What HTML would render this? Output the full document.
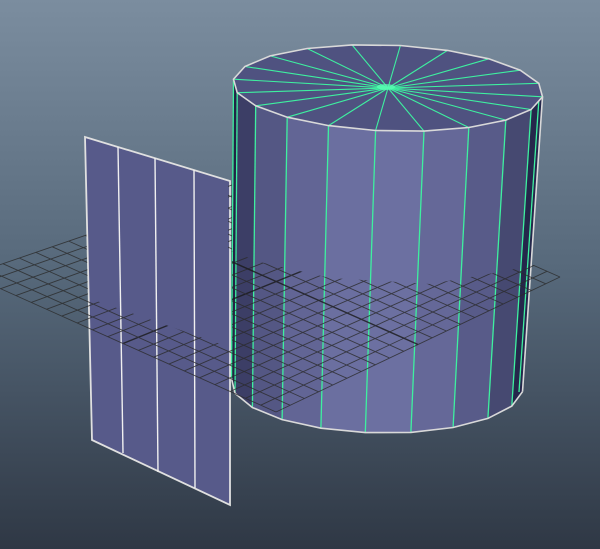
<!DOCTYPE html>
<html><head><meta charset="utf-8">
<style>html,body{margin:0;padding:0;width:600px;height:549px;overflow:hidden}svg{display:block}</style>
</head><body>
<svg width="600" height="549" viewBox="0 0 600 549" xmlns="http://www.w3.org/2000/svg">
<defs>
<linearGradient id="bg" x1="0" y1="0" x2="0" y2="1">
<stop offset="0" stop-color="#7b8d9f"/><stop offset="0.5" stop-color="#56687a"/><stop offset="1" stop-color="#2f3845"/>
</linearGradient>
<clipPath id="gclip">
<path clip-rule="evenodd" d="M-10 -10H610V560H-10Z M228 40 L548 40 L548 262 L500 272 L430 284 L330 278 L260 262 L228 250 Z M84 130 L232 175 L232 348 L88 298 Z"/>
</clipPath>
</defs>
<rect width="600" height="549" fill="url(#bg)"/>

<g stroke-width="0.6">
<polygon points="542.5,96.8 531.1,109.5 511.8,406.1 522.5,391.7" fill="rgb(37,39,75)" stroke="rgb(37,39,75)"/>
<polygon points="531.1,109.5 505.8,120.1 487.9,418.4 511.8,406.1" fill="rgb(70,73,113)" stroke="rgb(70,73,113)"/>
<polygon points="505.8,120.1 468.8,127.5 453.1,427.5 487.9,418.4" fill="rgb(88,91,137)" stroke="rgb(88,91,137)"/>
<polygon points="468.8,127.5 424,131.1 410.9,432.4 453.1,427.5" fill="rgb(101,104,152)" stroke="rgb(101,104,152)"/>
<polygon points="424,131.1 375.6,130.5 365.3,432.6 410.9,432.4" fill="rgb(108,112,161)" stroke="rgb(108,112,161)"/>
<polygon points="375.6,130.5 328.5,125.6 320.9,428.2 365.3,432.6" fill="rgb(107,111,160)" stroke="rgb(107,111,160)"/>
<polygon points="328.5,125.6 287.2,117.2 282.1,419.6 320.9,428.2" fill="rgb(98,101,149)" stroke="rgb(98,101,149)"/>
<polygon points="287.2,117.2 255.7,105.8 252.4,407.5 282.1,419.6" fill="rgb(84,87,132)" stroke="rgb(84,87,132)"/>
<polygon points="255.7,105.8 237.2,92.7 235,393.3 252.4,407.5" fill="rgb(60,62,102)" stroke="rgb(60,62,102)"/>
<polygon points="237.2,92.7 233.5,79.2 231.5,378.3 235,393.3" fill="rgb(34,36,70)" stroke="rgb(34,36,70)"/>
</g>
<g stroke="#3ef0a0" stroke-width="1.3">
<line x1="539" y1="98" x2="519" y2="392"/>
<line x1="531.1" y1="109.5" x2="511.8" y2="406.1"/>
<line x1="505.8" y1="120.1" x2="487.9" y2="418.4"/>
<line x1="468.8" y1="127.5" x2="453.1" y2="427.5"/>
<line x1="424" y1="131.1" x2="410.9" y2="432.4"/>
<line x1="375.6" y1="130.5" x2="365.3" y2="432.6"/>
<line x1="328.5" y1="125.6" x2="320.9" y2="428.2"/>
<line x1="287.2" y1="117.2" x2="282.1" y2="419.6"/>
<line x1="255.7" y1="105.8" x2="252.4" y2="407.5"/>
<line x1="237.2" y1="92.7" x2="235" y2="393.3"/>
<line x1="233.5" y1="79.2" x2="231.5" y2="378.3"/>
</g>
<line x1="542.5" y1="96.8" x2="522.5" y2="391.7" stroke="#d9d9d9" stroke-width="1.6"/>
<polygon points="542.5,96.8 531.1,109.5 505.8,120.1 468.8,127.5 424,131.1 375.6,130.5 328.5,125.6 287.2,117.2 255.7,105.8 237.2,92.7 233.5,79.2 244.9,66.5 270.2,55.9 307.2,48.5 352,44.9 400.4,45.5 447.5,50.4 488.8,58.8 520.3,70.2 538.8,83.3" fill="#4f5280"/>
<g stroke="#3ef0a0" stroke-width="1.1">
<line x1="388" y1="88" x2="542.5" y2="96.8"/><line x1="388" y1="88" x2="531.1" y2="109.5"/>
<line x1="388" y1="88" x2="505.8" y2="120.1"/><line x1="388" y1="88" x2="468.8" y2="127.5"/>
<line x1="388" y1="88" x2="424" y2="131.1"/><line x1="388" y1="88" x2="375.6" y2="130.5"/>
<line x1="388" y1="88" x2="328.5" y2="125.6"/><line x1="388" y1="88" x2="287.2" y2="117.2"/>
<line x1="388" y1="88" x2="255.7" y2="105.8"/><line x1="388" y1="88" x2="237.2" y2="92.7"/>
<line x1="388" y1="88" x2="233.5" y2="79.2"/><line x1="388" y1="88" x2="244.9" y2="66.5"/>
<line x1="388" y1="88" x2="270.2" y2="55.9"/><line x1="388" y1="88" x2="307.2" y2="48.5"/>
<line x1="388" y1="88" x2="352" y2="44.9"/><line x1="388" y1="88" x2="400.4" y2="45.5"/>
<line x1="388" y1="88" x2="447.5" y2="50.4"/><line x1="388" y1="88" x2="488.8" y2="58.8"/>
<line x1="388" y1="88" x2="520.3" y2="70.2"/><line x1="388" y1="88" x2="538.8" y2="83.3"/>
</g>
<ellipse cx="386" cy="87" rx="9" ry="3" fill="#5cffb5" opacity="0.7"/>
<polygon points="542.5,96.8 531.1,109.5 505.8,120.1 468.8,127.5 424,131.1 375.6,130.5 328.5,125.6 287.2,117.2 255.7,105.8 237.2,92.7 233.5,79.2 244.9,66.5 270.2,55.9 307.2,48.5 352,44.9 400.4,45.5 447.5,50.4 488.8,58.8 520.3,70.2 538.8,83.3" fill="none" stroke="#d9d9d9" stroke-width="1.6"/>
<polyline points="522.5,391.7 511.8,406.1 487.9,418.4 453.1,427.5 410.9,432.4 365.3,432.6 320.9,428.2 282.1,419.6 252.4,407.5 235,393.3 231.5,378.3" fill="none" stroke="#d9d9d9" stroke-width="1.6"/>

<polygon points="85,137 230,181 230,505 92,440" fill="#575a8a" stroke="#e0e0e0" stroke-width="1.8"/>
<g stroke="#f0f0f0" stroke-width="1.4">
<line x1="118" y1="147" x2="123" y2="453"/>
<line x1="155" y1="158" x2="158" y2="472"/>
<line x1="194" y1="170" x2="195" y2="488"/>
</g>

<g clip-path="url(#gclip)" stroke="#2b2b2b" stroke-width="0.9" opacity="0.8">
<line x1="-30" y1="275" x2="299" y2="162"/>
<line x1="-14.7" y1="281.9" x2="312.1" y2="167.8"/>
<line x1="0.6" y1="288.7" x2="325.1" y2="173.5"/>
<line x1="15.9" y1="295.6" x2="338.2" y2="179.3"/>
<line x1="31.2" y1="302.4" x2="351.2" y2="185"/>
<line x1="46.5" y1="309.3" x2="364.3" y2="190.8"/>
<line x1="61.8" y1="316.1" x2="377.3" y2="196.5"/>
<line x1="77.1" y1="323" x2="390.4" y2="202.3"/>
<line x1="92.4" y1="329.8" x2="403.4" y2="208"/>
<line x1="107.7" y1="336.7" x2="416.5" y2="213.8"/>
<line x1="123" y1="343.5" x2="429.5" y2="219.5" stroke="#1a1a1a" stroke-width="1.4"/>
<line x1="138.3" y1="350.4" x2="442.6" y2="225.3"/>
<line x1="153.6" y1="357.2" x2="455.6" y2="231"/>
<line x1="168.9" y1="364.1" x2="468.7" y2="236.8"/>
<line x1="184.2" y1="370.9" x2="481.7" y2="242.5"/>
<line x1="199.5" y1="377.8" x2="494.8" y2="248.3"/>
<line x1="214.8" y1="384.6" x2="507.8" y2="254"/>
<line x1="230.1" y1="391.5" x2="520.9" y2="259.8"/>
<line x1="245.4" y1="398.3" x2="533.9" y2="265.5"/>
<line x1="260.7" y1="405.2" x2="547" y2="271.3"/>
<line x1="276" y1="412" x2="560" y2="277"/>

<line x1="-30" y1="275" x2="276" y2="412"/>
<line x1="-13.6" y1="269.4" x2="290.2" y2="405.3"/>
<line x1="2.9" y1="263.7" x2="304.4" y2="398.5"/>
<line x1="19.4" y1="258.1" x2="318.6" y2="391.8"/>
<line x1="35.8" y1="252.4" x2="332.8" y2="385"/>
<line x1="52.3" y1="246.8" x2="347" y2="378.3"/>
<line x1="68.7" y1="241.1" x2="361.2" y2="371.5"/>
<line x1="85.2" y1="235.5" x2="375.4" y2="364.8"/>
<line x1="101.6" y1="229.8" x2="389.6" y2="358"/>
<line x1="118.1" y1="224.2" x2="403.8" y2="351.3"/>
<line x1="134.5" y1="218.5" x2="418" y2="344.5" stroke="#1a1a1a" stroke-width="1.4"/>
<line x1="151" y1="212.9" x2="432.2" y2="337.8"/>
<line x1="167.4" y1="207.2" x2="446.4" y2="331"/>
<line x1="183.9" y1="201.6" x2="460.6" y2="324.3"/>
<line x1="200.3" y1="195.9" x2="474.8" y2="317.5"/>
<line x1="216.8" y1="190.3" x2="489" y2="310.8"/>
<line x1="233.2" y1="184.6" x2="503.2" y2="304"/>
<line x1="249.7" y1="179" x2="517.4" y2="297.3"/>
<line x1="266.1" y1="173.3" x2="531.6" y2="290.5"/>
<line x1="282.6" y1="167.7" x2="545.8" y2="283.8"/>
<line x1="299" y1="162" x2="560" y2="277"/>
</g>
</svg>
</body></html>
